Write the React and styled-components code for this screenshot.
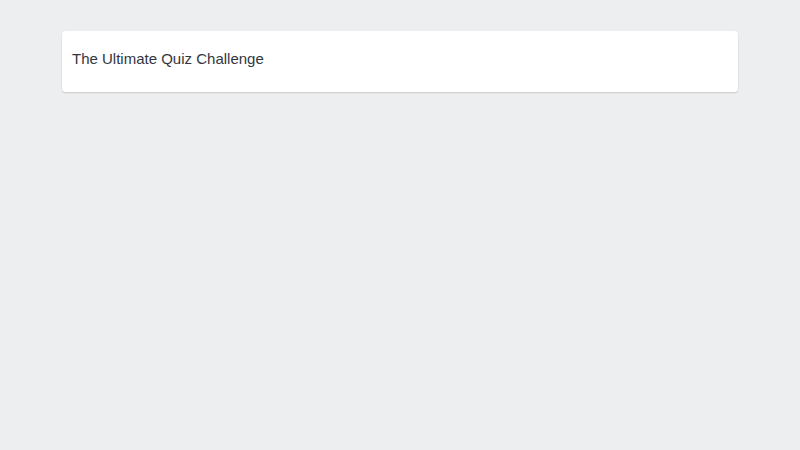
import styled, { createGlobalStyle } from "styled-components";

const GlobalStyle = createGlobalStyle`
  body {
    margin: 0;
    background: #edeef0;
    font-family: "Liberation Sans", Arial, sans-serif;
  }
`;

const Page = styled.div`
  padding: 31px 62px;
`;

const Card = styled.div`
  background: #fff;
  border-radius: 4px;
  box-shadow: 0 1px 2px rgba(0, 0, 0, 0.15);
  height: 61px;
  padding: 0 10px;
  display: flex;
  align-items: center;
  box-sizing: border-box;
`;

const Title = styled.h1`
  margin: 0 0 6px;
  font-size: 15px;
  font-weight: 400;
  color: #33373d;
`;

export default function App() {
  return (
    <>
      <GlobalStyle />
      <Page>
        <Card>
          <Title>The Ultimate Quiz Challenge</Title>
        </Card>
      </Page>
    </>
  );
}
